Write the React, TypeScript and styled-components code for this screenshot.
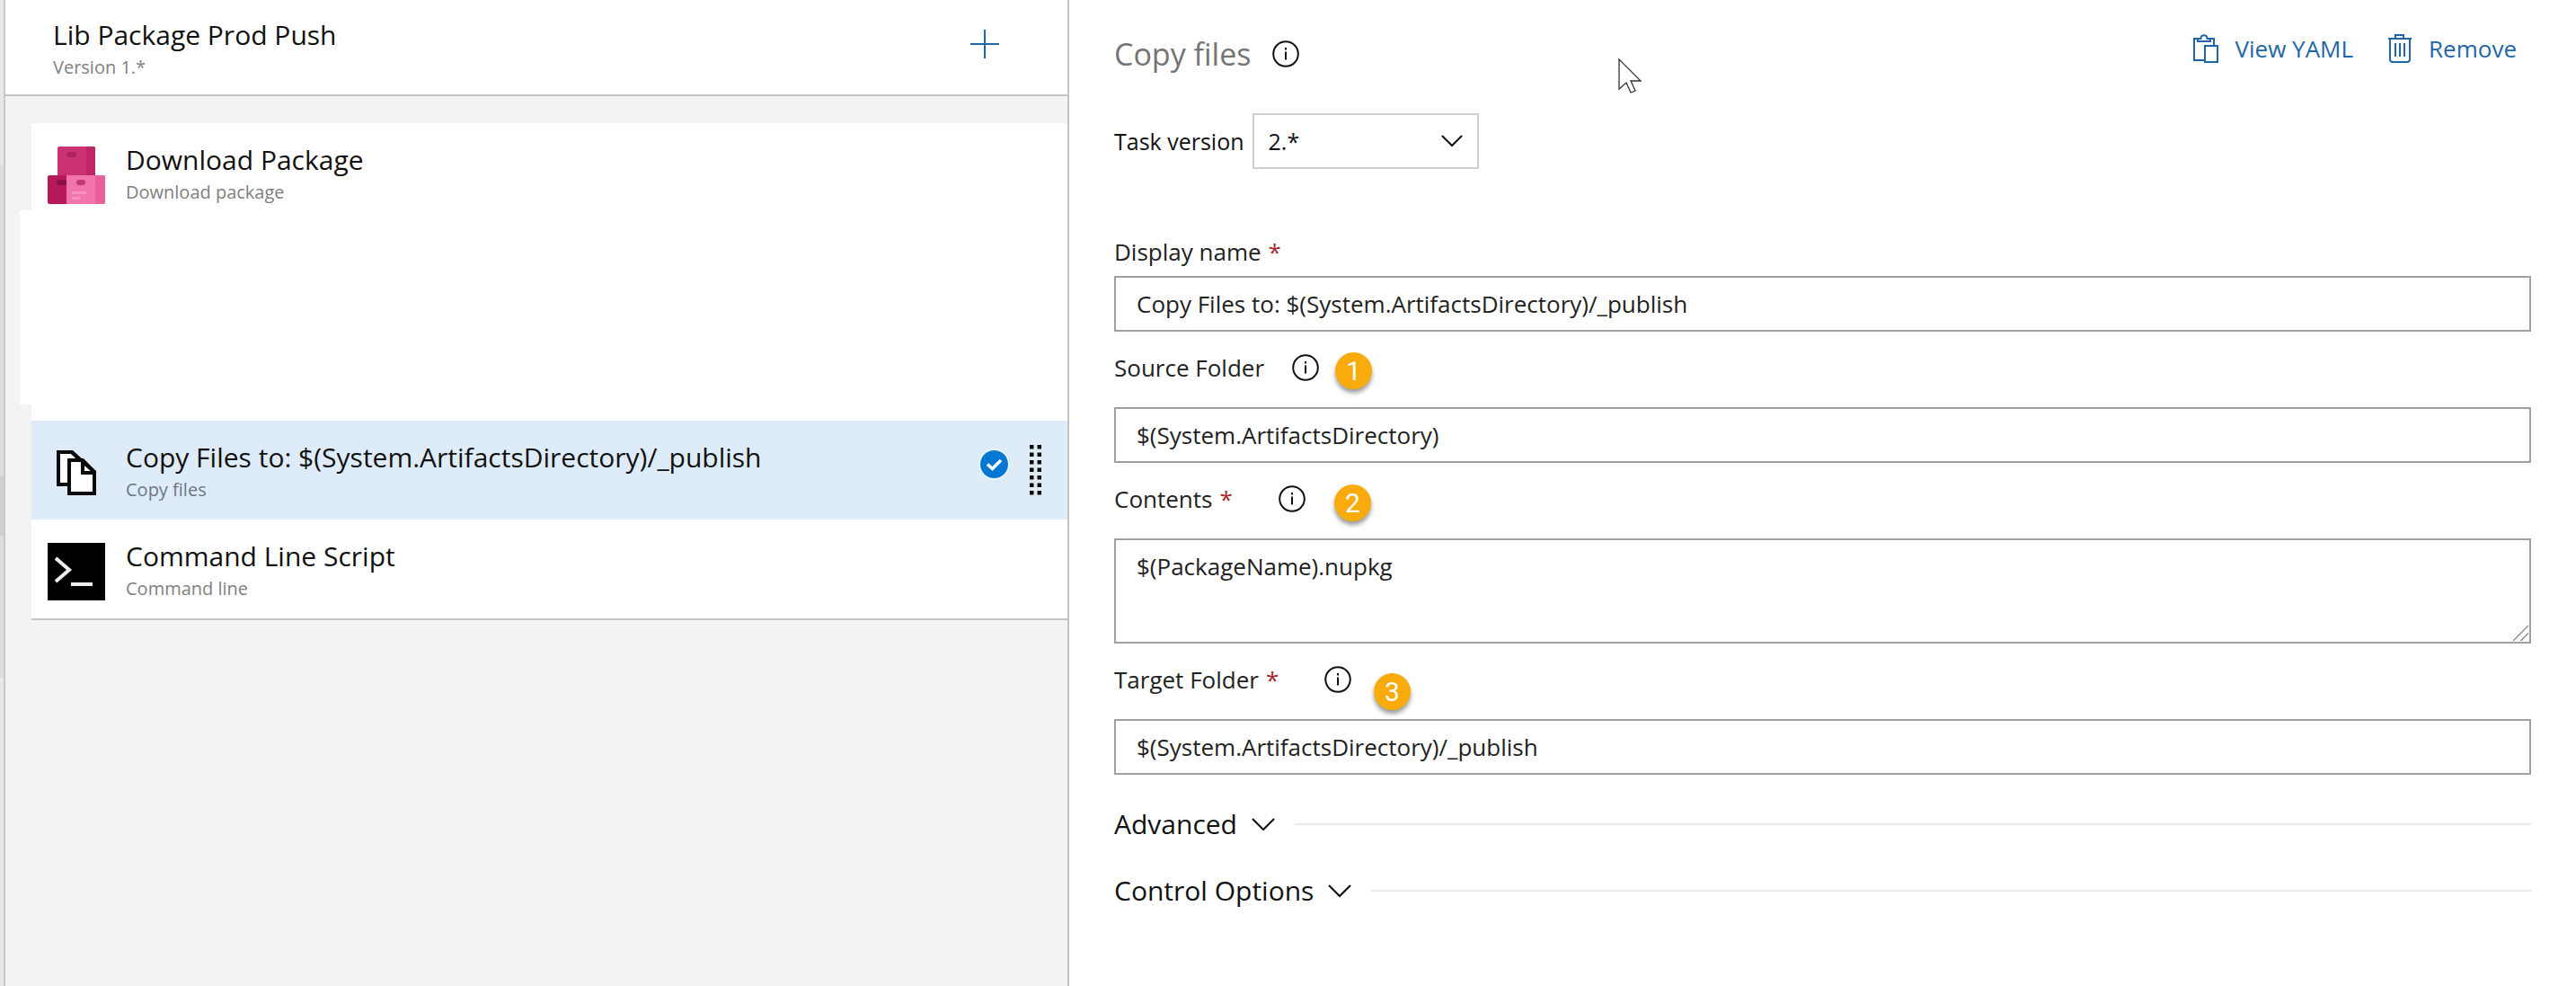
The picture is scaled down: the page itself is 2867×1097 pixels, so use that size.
import React, { useState } from "react";
import styled, { createGlobalStyle } from "styled-components";

const link = "#1f66a8";
const uiFont = `"Open Sans", "Noto Sans", "Liberation Sans", sans-serif`;

const GlobalStyle = createGlobalStyle`
  *, *::before, *::after { box-sizing: border-box; }
  body { margin: 0; background: #fff; color: #111; font-family: ${uiFont}; }
  button, input, select, textarea { font: inherit; color: inherit; margin: 0; }
  button { background: none; border: 0; padding: 0; cursor: pointer; }
  h1, h2, h3, p, ul { margin: 0; padding: 0; font-weight: 400; }
  svg { display: block; flex: none; }
`;

const Page = styled.div`
  display: grid;
  grid-template-columns: 6px minmax(0, 1184fr) minmax(0, 1677fr);
  min-height: 100vh;
`;

const Gutter = styled.div`
  background: linear-gradient(
    #e8e8e8 184px,
    #dcdcdc 184px,
    #dcdcdc 530px,
    #d0d0d0 530px,
    #d0d0d0 596px,
    #dcdcdc 596px,
    #dcdcdc 754px,
    #e8e8e8 754px
  );
  border-right: 2px solid #c8c8c8;
`;

const TaskPane = styled.section`
  background: #f3f3f3;
  border-right: 2px solid #c4c4c4;
`;

const JobHeader = styled.header`
  display: flex;
  align-items: flex-start;
  justify-content: space-between;
  padding: 17px 76px 16px 53px;
  background: #fff;
  border-bottom: 2px solid #c4c4c4;
`;

const TextGroup = styled.div`
  flex: 1;
  min-width: 0;
`;

const Title = styled.h3`
  font-size: 30px;
  line-height: 44px;
`;

const Subtitle = styled.p<{ $selected?: boolean }>`
  font-size: 20px;
  line-height: 28px;
  color: ${(p) => (p.$selected ? "#6c7784" : "#808080")};
`;

const AddButton = styled.button`
  padding-top: 16px;
  color: ${link};
`;

const TaskList = styled.ul`
  list-style: none;
  margin: 30px 0 0 29px;
  background: #fff;
  border-bottom: 2px solid #c4c4c4;
`;

const TaskRow = styled.li<{ $selected?: boolean }>`
  display: flex;
  gap: 23px;
  padding: 19px 28px 19px 18px;
  background: ${(p) => (p.$selected ? "#deecf9" : "#fff")};
`;

const RowIcon = styled.span`
  padding-top: 7px;
`;

const RowTools = styled.span`
  display: flex;
  align-items: center;
  gap: 22px;
`;

const CheckMark = styled.span`
  padding-bottom: 14px;
`;

const HiddenTasks = styled.li`
  height: 221px;
  display: flex;

  &::before {
    content: "";
    flex: 1;
    height: 216px;
    margin: -13px 0 0 -13px;
    background: #fff;
  }
`;

const Details = styled.main`
  padding: 32px 50px 32px;
`;

const DetailsHeader = styled.header`
  display: flex;
  align-items: flex-start;
  justify-content: space-between;
`;

const Heading = styled.h2`
  display: flex;
  align-items: center;
  gap: 24px;
  padding-top: 6px;
  font-size: 34px;
  line-height: 44px;
  color: #747474;
`;

const Actions = styled.div`
  display: flex;
  gap: 38px;
  padding-right: 16px;
`;

const ActionButton = styled.button`
  display: flex;
  align-items: center;
  gap: 18px;
  font-size: 26px;
  line-height: 44px;
  color: ${link};
`;

const VersionRow = styled.div`
  display: flex;
  align-items: center;
  gap: 9px;
  margin: 44px 0 72px;
  font-size: 25px;
`;

const VersionBox = styled.div`
  position: relative;
  width: 252px;

  svg {
    position: absolute;
    right: 18px;
    top: 24px;
    pointer-events: none;
  }
`;

const VersionSelect = styled.select`
  appearance: none;
  width: 100%;
  height: 62px;
  padding: 0 48px 0 16px;
  border: 2px solid #d0d0d0;
  border-radius: 0;
  background: #fff;
`;

const Field = styled.div<{ $compact?: boolean }>`
  display: flex;
  flex-direction: column;
  gap: ${(p) => (p.$compact ? 7 : 24)}px;
  margin-bottom: 20px;
`;

const LabelRow = styled.div<{ $required?: boolean }>`
  position: relative;
  display: flex;
  align-items: center;
  gap: ${(p) => (p.$required ? 51 : 31)}px;
  height: 40px;
  font-size: 26px;
  line-height: 40px;
  color: #222;
`;

const Star = styled.span`
  margin-left: 8px;
  color: #a4262c;
`;

const Badge = styled.span<{ $left: number; $top: number }>`
  position: absolute;
  left: ${(p) => p.$left}px;
  top: ${(p) => p.$top}px;
  width: 41px;
  height: 41px;
  border-radius: 50%;
  background: #f8ab0a;
  box-shadow: 0 4px 5px rgba(0, 0, 0, 0.4);
  color: #fff;
  font: 30px/41px Roboto, "Liberation Sans", sans-serif;
  text-align: center;
`;

const TextInput = styled.input`
  width: 100%;
  height: 62px;
  padding: 0 23px;
  border: 2px solid #a0a0a0;
  border-radius: 0;
  background: #fff;
  color: #222;
  font-size: 26px;
`;

const TextAreaBox = styled.div`
  position: relative;

  svg {
    position: absolute;
    right: 3px;
    bottom: 3px;
    pointer-events: none;
  }
`;

const TextArea = styled.textarea`
  display: block;
  width: 100%;
  height: 117px;
  padding: 9px 23px;
  border: 2px solid #a0a0a0;
  border-radius: 0;
  background: #fff;
  color: #222;
  font-size: 26px;
  line-height: 40px;

  &::-webkit-resizer {
    background: #fff;
  }
`;

const Sections = styled.div`
  display: flex;
  flex-direction: column;
  gap: 30px;
  padding-top: 13px;
`;

const SectionToggle = styled.button`
  display: flex;
  align-items: center;
  width: 100%;
  gap: 16px;
  font-size: 30px;
  line-height: 44px;

  &::after {
    content: "";
    flex: 1;
    margin-left: 6px;
    border-top: 2px solid #eaeaea;
  }
`;

const Pointer = styled.svg`
  position: absolute;
  left: 1801px;
  top: 64px;
  pointer-events: none;
`;

const PlusIcon = () => (
  <svg width="32" height="32" viewBox="0 0 32 32" stroke="currentColor" strokeWidth="2" aria-hidden="true">
    <path d="M16 0v32M0 16h32" />
  </svg>
);

const InfoIcon = () => (
  <svg width="30" height="30" viewBox="0 0 30 30" fill="none" stroke="#111" strokeWidth="2" role="img" aria-label="Information">
    <circle cx="15" cy="15" r="13.8" />
    <path d="M15 12.5v9M15 8v2.4" />
  </svg>
);

const Chevron = ({ width = 26 }: { width?: number }) => (
  <svg width={width} height={width / 2 + 2} viewBox="0 0 26 15" fill="none" stroke="#111" strokeWidth="2.2" aria-hidden="true">
    <path d="M1 1l12 12L25 1" />
  </svg>
);

const ResizeGrip = () => (
  <svg width="17" height="17" viewBox="0 0 17 17" fill="none" stroke="#777" strokeWidth="1.2" aria-hidden="true">
    <path d="M0 17L17 0M8.500 17L17 8.500" />
  </svg>
);

const ClipboardIcon = () => (
  <svg width="30" height="32" viewBox="0 0 30 32" fill="none" stroke="currentColor" strokeWidth="2" aria-hidden="true">
    <path d="M13 29H2V5h4M20 5h4v8" />
    <path d="M6 8V5h3.500c0-5 7-5 7 0H20v3z" />
    <path d="M14 13h14v18H14z" />
  </svg>
);

const TrashIcon = () => (
  <svg width="28" height="32" viewBox="0 0 28 32" fill="none" stroke="currentColor" strokeWidth="2" aria-hidden="true">
    <path d="M1 5h26M9 5V1h9v4M3 5v23q0 3 3 3h16q3 0 3-3V5" />
    <path d="M9 10v15M14 10v15M19 10v15" />
  </svg>
);

const PackageIcon = () => (
  <svg width="64" height="64" viewBox="0 0 64 64" aria-hidden="true">
    <path d="M13 0h38q2 0 2 2v34H11V2q0-2 2-2z" fill="#cb3272" />
    <path d="M43 0h8q2 0 2 2v34H43z" fill="#be2668" />
    <rect x="21" y="6" width="11" height="6" rx="3" fill="#a82560" />
    <path d="M2 32h20v32H2q-2 0-2-2V34q0-2 2-2z" fill="#b61a5c" />
    <rect x="10" y="37" width="11" height="6" rx="3" fill="#8c1048" />
    <path d="M21 32h41q2 0 2 2v28q0 2-2 2H21z" fill="#f174aa" />
    <path d="M53 32h9q2 0 2 2v28q0 2-2 2h-9z" fill="#e7609a" />
    <rect x="32" y="37" width="10" height="6" rx="3" fill="#c23873" />
    <path d="M27 50h16v3H27zM27 56h9v3h-9z" fill="#f78fbd" />
  </svg>
);

const CopyIcon = () => (
  <svg width="64" height="64" viewBox="0 0 64 64" fill="#fff" stroke="#0a0a0a" strokeWidth="4" aria-hidden="true">
    <path d="M12 9h15l9 9v27H12z" />
    <path d="M24 18h15l13 13v24H24z" />
    <path d="M39 18v14h13" />
    <path d="M27 9l26 23" />
  </svg>
);

const TerminalIcon = () => (
  <svg width="64" height="64" viewBox="0 0 64 64" fill="none" aria-hidden="true">
    <path d="M0 0h64v64H0z" fill="#000" />
    <path d="M9 17l15 13L9 43" stroke="#eee" strokeWidth="4" />
    <path d="M26 46h24" stroke="#eee" strokeWidth="4" />
  </svg>
);

const CheckIcon = () => (
  <svg width="35" height="35" viewBox="0 0 35 35" aria-hidden="true">
    <circle cx="17.500" cy="17.500" r="17" fill="#f2f8fd" />
    <circle cx="17.500" cy="17.500" r="15.500" fill="#0078d4" />
    <path d="M10 17.500l5.500 5L25 13" fill="none" stroke="#fff" strokeWidth="3.600" />
  </svg>
);

const GripIcon = () => (
  <svg width="14" height="56" viewBox="0 0 14 56" fill="#0a0a0a" aria-hidden="true">
    {[0, 1, 2, 3, 4, 5, 6].map((i) => (
      <path key={i} d={`M0 ${i * 8.5}h4.500v4.500H0zM8.500 ${i * 8.5}h4.500v4.500H8.500z`} />
    ))}
  </svg>
);

type FieldProps = {
  id: string;
  label: string;
  value: string;
  required?: boolean;
  info?: boolean;
  multiline?: boolean;
  badge?: { text: string; left: number; top: number };
};

function TaskField({ id, label, value, required, info, multiline, badge }: FieldProps) {
  const [text, setText] = useState(value);
  return (
    <Field $compact={!info}>
      <LabelRow $required={required}>
        <label htmlFor={id}>
          {label}
          {required && <Star>*</Star>}
        </label>
        {info && <InfoIcon />}
        {badge && (
          <Badge $left={badge.left} $top={badge.top}>
            {badge.text}
          </Badge>
        )}
      </LabelRow>
      {multiline ? (
        <TextAreaBox>
          <TextArea id={id} value={text} onChange={(e) => setText(e.target.value)} />
          <ResizeGrip />
        </TextAreaBox>
      ) : (
        <TextInput id={id} value={text} onChange={(e) => setText(e.target.value)} />
      )}
    </Field>
  );
}

export default function App() {
  return (
    <>
      <GlobalStyle />
      <Page>
        <Gutter />
        <TaskPane>
          <JobHeader>
            <TextGroup>
              <Title as="h1">Lib Package Prod Push</Title>
              <Subtitle>Version 1.*</Subtitle>
            </TextGroup>
            <AddButton aria-label="Add a task">
              <PlusIcon />
            </AddButton>
          </JobHeader>
          <TaskList>
            <TaskRow>
              <RowIcon>
                <PackageIcon />
              </RowIcon>
              <TextGroup>
                <Title>Download Package</Title>
                <Subtitle>Download package</Subtitle>
              </TextGroup>
            </TaskRow>
            <HiddenTasks />
            <TaskRow $selected>
              <RowIcon>
                <CopyIcon />
              </RowIcon>
              <TextGroup>
                <Title>Copy Files to: $(System.ArtifactsDirectory)/_publish</Title>
                <Subtitle $selected>Copy files</Subtitle>
              </TextGroup>
              <RowTools>
                <CheckMark>
                  <CheckIcon />
                </CheckMark>
                <GripIcon />
              </RowTools>
            </TaskRow>
            <TaskRow>
              <RowIcon>
                <TerminalIcon />
              </RowIcon>
              <TextGroup>
                <Title>Command Line Script</Title>
                <Subtitle>Command line</Subtitle>
              </TextGroup>
            </TaskRow>
          </TaskList>
        </TaskPane>
        <Details>
          <DetailsHeader>
            <Heading>
              Copy files
              <InfoIcon />
            </Heading>
            <Actions>
              <ActionButton>
                <ClipboardIcon />
                View YAML
              </ActionButton>
              <ActionButton>
                <TrashIcon />
                Remove
              </ActionButton>
            </Actions>
          </DetailsHeader>
          <VersionRow>
            <label htmlFor="version">Task version</label>
            <VersionBox>
              <VersionSelect id="version" defaultValue="2">
                <option value="2">2.*</option>
              </VersionSelect>
              <Chevron width={24} />
            </VersionBox>
          </VersionRow>
          <TaskField id="display" label="Display name" required value="Copy Files to: $(System.ArtifactsDirectory)/_publish" />
          <TaskField id="source" label="Source Folder" info value="$(System.ArtifactsDirectory)" badge={{ text: "1", left: 246, top: 3 }} />
          <TaskField id="contents" label="Contents" required info multiline value="$(PackageName).nupkg" badge={{ text: "2", left: 245, top: 4 }} />
          <TaskField id="target" label="Target Folder" required info value="$(System.ArtifactsDirectory)/_publish" badge={{ text: "3", left: 289, top: 13 }} />
          <Sections>
            <SectionToggle>
              Advanced
              <Chevron />
            </SectionToggle>
            <SectionToggle>
              Control Options
              <Chevron />
            </SectionToggle>
          </Sections>
        </Details>
      </Page>
      <Pointer width="27" height="42" viewBox="0 0 27 42" fill="#fff" stroke="#333" strokeWidth="1.300" aria-hidden="true">
        <path d="M1 2v33l8-7 5 11 5-2-5-11h11z" />
      </Pointer>
    </>
  );
}
